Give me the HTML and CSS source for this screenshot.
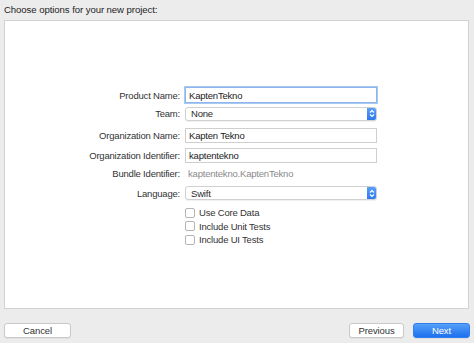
FILE: index.html
```html
<!DOCTYPE html>
<html lang="en">

<head>
    <meta charset="UTF-8">
    <meta name="viewport" content="width=device-width, initial-scale=1.0">
    <title>New Project</title>
    <link rel="stylesheet" href="styles.css">
</head>

<body>
    <div class="sheet">
        <h1 class="sheet-title">Choose options for your new project:</h1>

        <div class="panel">
            <form class="options">
                <label class="row-label" for="productName">Product Name:</label>
                <div class="field-wrap">
                    <input class="text-field focused" type="text" id="productName" value="KaptenTekno">
                </div>

                <label class="row-label">Team:</label>
                <div class="field-wrap">
                    <div class="popup">
                        <span class="popup-value">None</span>
                        <span class="stepper">
                            <svg width="6" height="9" viewBox="0 0 6 9"><path d="M1 3.5 L3 1.5 L5 3.5 M1 5.5 L3 7.5 L5 5.5" fill="none" stroke="#fff" stroke-width="1.1"/></svg>
                        </span>
                    </div>
                </div>

                <label class="row-label" for="orgName">Organization Name:</label>
                <div class="field-wrap">
                    <input class="text-field" type="text" id="orgName" value="Kapten Tekno">
                </div>

                <label class="row-label" for="orgId">Organization Identifier:</label>
                <div class="field-wrap">
                    <input class="text-field" type="text" id="orgId" value="kaptentekno">
                </div>

                <span class="row-label">Bundle Identifier:</span>
                <div class="field-wrap">
                    <span class="static-value">kaptentekno.KaptenTekno</span>
                </div>

                <label class="row-label">Language:</label>
                <div class="field-wrap">
                    <div class="popup">
                        <span class="popup-value">Swift</span>
                        <span class="stepper">
                            <svg width="6" height="9" viewBox="0 0 6 9"><path d="M1 3.5 L3 1.5 L5 3.5 M1 5.5 L3 7.5 L5 5.5" fill="none" stroke="#fff" stroke-width="1.1"/></svg>
                        </span>
                    </div>
                </div>

                <div class="checks">
                    <label class="check"><span class="box"></span>Use Core Data</label>
                    <label class="check"><span class="box"></span>Include Unit Tests</label>
                    <label class="check"><span class="box"></span>Include UI Tests</label>
                </div>
            </form>
        </div>

        <div class="footer">
            <button type="button" class="btn cancel">Cancel</button>
            <div class="footer-right">
                <button type="button" class="btn previous">Previous</button>
                <button type="button" class="btn next">Next</button>
            </div>
        </div>
    </div>
</body>

</html>
```

FILE: styles.css
```css
body {
    margin: 0;
    padding: 0;
    background-color: #ececec; /* window grey */
    font-family: "Liberation Sans", Arial, sans-serif;
    font-size: 9.5px;
    letter-spacing: -0.2px;
    color: #2a2a2a;
}

.sheet {
    width: 474px;
    height: 343px;
    display: flex;
    flex-direction: column;
}

.sheet-title {
    margin: 0;
    padding: 4px 0 0 4px;
    height: 16px;
    font-size: 9.6px;
    letter-spacing: -0.08px;
    font-weight: normal;
    color: #1e1e1e;
}

.panel {
    margin: 0 5px 0 4px;
    height: 287px;
    background-color: #fff;
    border: 1px solid #d2d2d2;
    box-sizing: content-box;
}

.options {
    display: grid;
    grid-template-columns: 175px 192px;
    grid-template-rows: 18px 19px 24px 16px 20px 20px auto;
    column-gap: 5px;
    align-items: center;
    padding: 65px 0 0 0;
}

.row-label {
    text-align: right;
    color: #333;
}

.field-wrap {
    display: flex;
    align-items: center;
}

.text-field {
    width: 192px;
    height: 15px;
    box-sizing: border-box;
    border: 1px solid #cfcfcf;
    padding: 0 3px;
    font-family: inherit;
    font-size: 9.5px;
    letter-spacing: -0.2px;
    color: #222;
    outline: none;
}

.text-field.focused {
    height: 16px;
    border: 1px solid #8fb6ec;
    box-shadow: 0 0 0 1px #a9c9f3; /* focus ring */
}

.popup {
    width: 192px;
    height: 14px;
    box-sizing: border-box;
    display: flex;
    align-items: center;
    justify-content: space-between;
    background-color: #fff;
    border: 1px solid #d0d0d0;
    border-radius: 3px;
    box-shadow: 0 1px 1px rgba(0, 0, 0, 0.06);
    overflow: hidden;
}

.popup-value {
    padding-left: 5px;
}

.stepper {
    width: 10px;
    height: 14px;
    margin-right: -1px;
    display: flex;
    align-items: center;
    justify-content: center;
    background: linear-gradient(#5ea4f8, #2b73ee);
    border-radius: 0 3px 3px 0;
}

.static-value {
    padding-left: 3px;
    color: #8a8a8a;
}

.checks {
    grid-column: 2;
    display: flex;
    flex-direction: column;
    padding-top: 3px;
}

.check {
    display: flex;
    align-items: center;
    height: 13.5px;
    color: #333;
}

.check .box {
    width: 8px;
    height: 8px;
    margin-right: 4px;
    border: 1px solid #b4b4b4;
    border-radius: 2px;
    background-color: #fff;
}

.footer {
    display: flex;
    justify-content: space-between;
    align-items: center;
    padding: 14px 4px 0 4px;
}

.footer-right {
    display: flex;
    gap: 9px;
}

.btn {
    height: 15px;
    padding: 0;
    font-family: inherit;
    font-size: 9.5px;
    letter-spacing: -0.1px;
    color: #333;
    background-color: #fff;
    border: 1px solid #c9c9c9;
    border-radius: 3px;
    box-shadow: 0 1px 0 rgba(0, 0, 0, 0.05);
}

.cancel {
    width: 67px;
}

.previous {
    width: 55px;
}

.next {
    width: 57px;
    color: #fff;
    border-color: #2f7ff0;
    background: linear-gradient(#56a0f8, #1c70ef);
}
```
